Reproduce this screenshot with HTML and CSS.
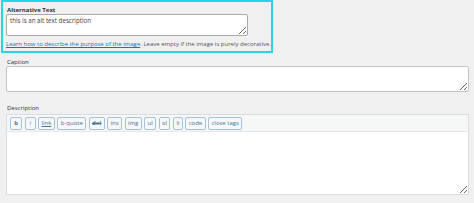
FILE: index.html
```html
<!DOCTYPE html>
<html>
<head>
<meta charset="utf-8">
<link rel="stylesheet" href="styles.css">
</head>
<body>
<div class="page">
  <section class="alt-box">
    <label class="field-label">Alternative Text</label>
    <textarea class="ta ta-alt">this is an alt text description</textarea>
    <p class="hint"><a href="#">Learn how to describe the purpose of the image</a>. Leave empty if the image is purely decorative.</p>
  </section>

  <section class="field caption">
    <label class="field-label normal">Caption</label>
    <textarea class="ta ta-caption"></textarea>
  </section>

  <section class="field description">
    <label class="field-label normal">Description</label>
    <div class="editor">
      <div class="toolbar">
        <span class="qt b">b</span>
        <span class="qt i">i</span>
        <span class="qt u">link</span>
        <span class="qt">b-quote</span>
        <span class="qt s">del</span>
        <span class="qt">ins</span>
        <span class="qt">img</span>
        <span class="qt">ul</span>
        <span class="qt">ol</span>
        <span class="qt">li</span>
        <span class="qt">code</span>
        <span class="qt">close tags</span>
      </div>
      <textarea class="ta-editor"></textarea>
    </div>
  </section>
</div>
</body>
</html>
```

FILE: styles.css
```css
* { box-sizing: border-box; }
html, body { margin: 0; padding: 0; }
body {
  background: #f0f0f1;
  font-family: "Open Sans", "Noto Sans", sans-serif;
  font-size: 6px;
  color: #1d2327;
  width: 474px;
  height: 203px;
  overflow: hidden;
}
.page { padding: 0; }

.alt-box {
  margin-left: 1px;
  width: 272px;
  height: 53px;
  border: 2px solid #27d6e2;
  padding: 4px 3px 0 3px;
}
.field-label {
  display: block;
  font-weight: 700;
  font-size: 6px;
  line-height: 8px;
  margin-left: 1px;
  color: #2c3338;
}
.field-label.normal { font-weight: 400; }

.ta {
  display: block;
  font-family: inherit;
  font-size: 6.2px;
  line-height: 8px;
  color: #3c434a;
  background: #fff;
  border: 1px solid #a7aaad;
  border-radius: 2px;
  padding: 2px 3px;
  margin: 0;
  outline: none;
}
.ta-alt {
  width: 242px;
  height: 22px;
}
.hint {
  margin: 4px 0 0 0;
  font-size: 6px;
  line-height: 8px;
  color: #50575e;
  white-space: nowrap;
}
.hint a { color: #2271b1; text-decoration: underline; }

.field .field-label { margin-left: 7px; }
.caption { margin-top: 5px; }
.ta-caption {
  margin-left: 6px;
  width: 463px;
  height: 26px;
  border-color: #c3c4c7;
}
.description { margin-top: 12px; }
.description .field-label { margin-bottom: 2px; }

.editor {
  margin-left: 6px;
  width: 463px;
  height: 81px;
  border: 1px solid #dcdcde;
  background: #fff;
  display: flex;
  flex-direction: column;
}
.toolbar {
  height: 17px;
  background: #f6f7f7;
  border-bottom: 1px solid #e6e6e8;
  padding: 2px 3px 0 3px;
  display: flex;
  gap: 2.7px;
  align-items: flex-start;
}
.qt {
  height: 12.6px;
  padding: 0 2.3px;
  border: 1px solid #a9c1d8;
  border-radius: 2px;
  background: #f6f7f7;
  color: #45749f;
  font-size: 6px;
  line-height: 10.6px;
  white-space: nowrap;
}
.qt.b { font-weight: 700; padding: 0 3.2px; }
.qt.i { font-style: italic; padding: 0 3.6px; }
.qt.u { text-decoration: underline; }
.qt.s { text-decoration: line-through; font-weight: 700; }
.ta-editor {
  flex: 1;
  width: 100%;
  border: none;
  outline: none;
  margin: 0;
  padding: 3px;
  background: #fff;
  font-family: inherit;
  font-size: 6.2px;
}
```
